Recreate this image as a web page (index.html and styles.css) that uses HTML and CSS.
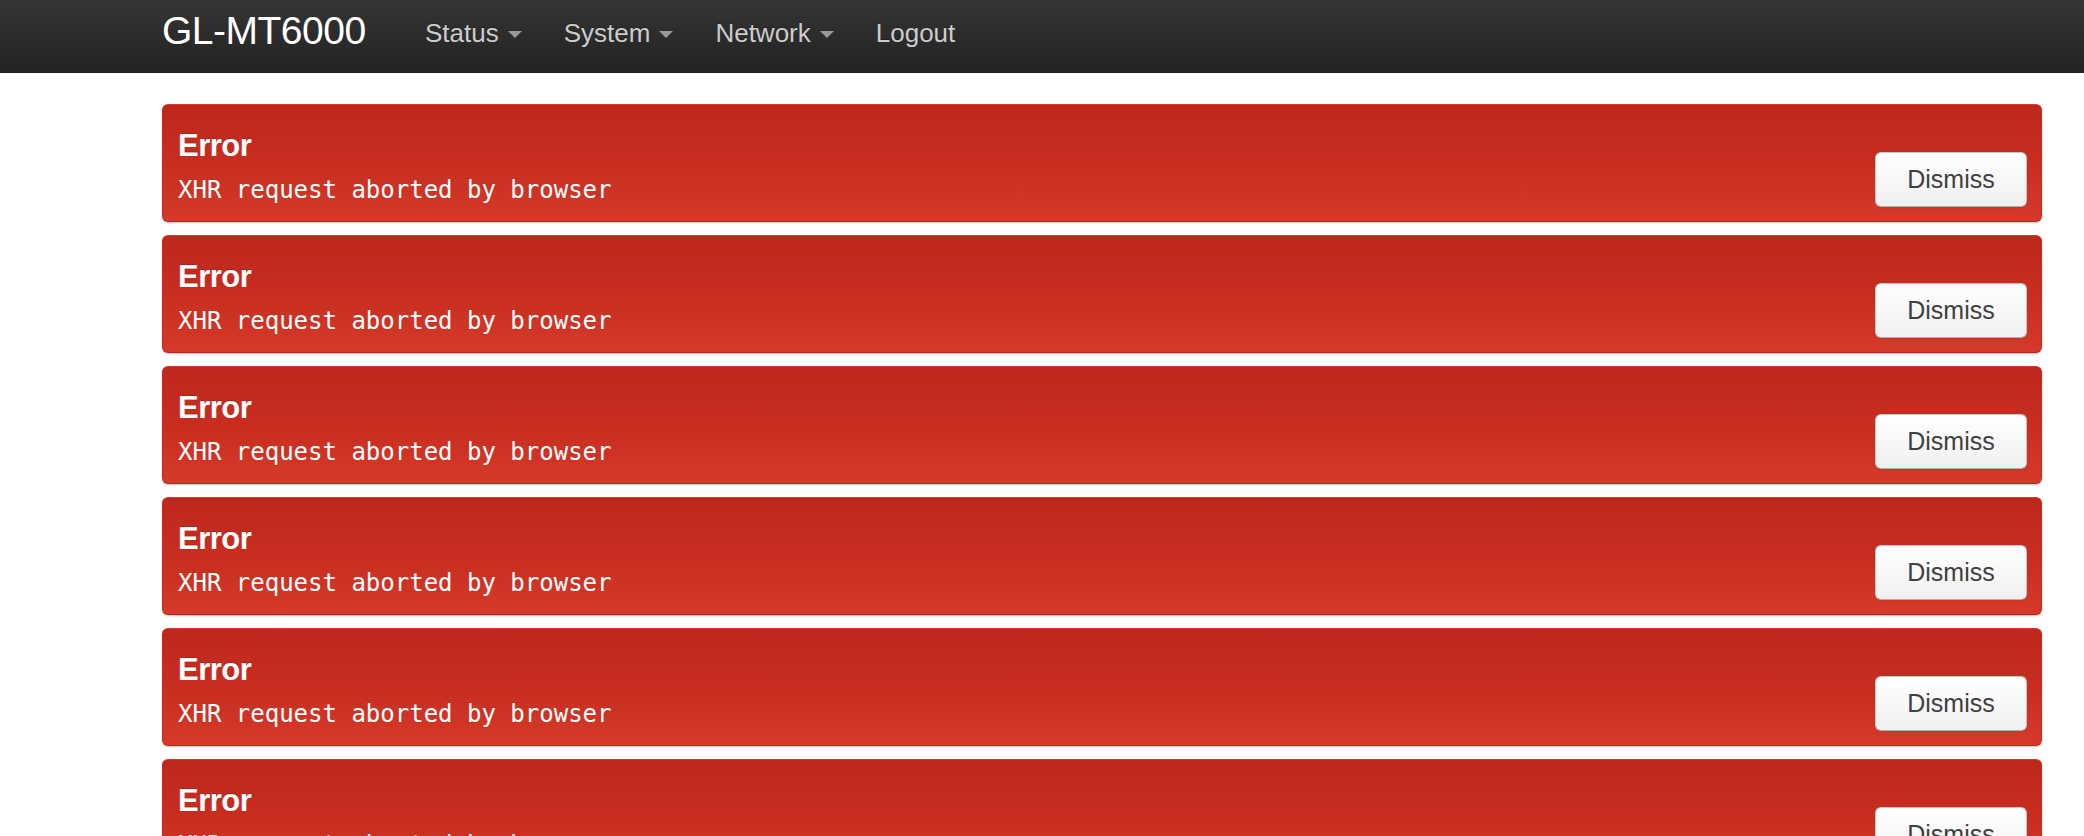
FILE: index.html
```html
<!DOCTYPE html>
<html lang="en">
<head>
    <meta charset="UTF-8">
    <meta name="viewport" content="width=device-width, initial-scale=1.0">
    <title>GL-MT6000 - LuCI</title>
    <link rel="stylesheet" href="styles.css">
</head>

<body>
    <header class="topbar">
        <div class="container flex">
            <a href="#" class="brand">GL-MT6000</a>
            <ul class="nav flex">
                <li><a href="#" class="menu">Status</a></li>
                <li><a href="#" class="menu">System</a></li>
                <li><a href="#" class="menu">Network</a></li>
                <li><a href="#">Logout</a></li>
            </ul>
        </div>
    </header>

    <main class="container" id="messages">
        <div class="alert-message error">
            <div class="alert-text">
                <h4>Error</h4>
                <pre>XHR request aborted by browser</pre>
            </div>
            <button class="btn">Dismiss</button>
        </div>
        <div class="alert-message error">
            <div class="alert-text">
                <h4>Error</h4>
                <pre>XHR request aborted by browser</pre>
            </div>
            <button class="btn">Dismiss</button>
        </div>
        <div class="alert-message error">
            <div class="alert-text">
                <h4>Error</h4>
                <pre>XHR request aborted by browser</pre>
            </div>
            <button class="btn">Dismiss</button>
        </div>
        <div class="alert-message error">
            <div class="alert-text">
                <h4>Error</h4>
                <pre>XHR request aborted by browser</pre>
            </div>
            <button class="btn">Dismiss</button>
        </div>
        <div class="alert-message error">
            <div class="alert-text">
                <h4>Error</h4>
                <pre>XHR request aborted by browser</pre>
            </div>
            <button class="btn">Dismiss</button>
        </div>
        <div class="alert-message error">
            <div class="alert-text">
                <h4>Error</h4>
                <pre>XHR request aborted by browser</pre>
            </div>
            <button class="btn">Dismiss</button>
        </div>
    </main>
</body>
</html>
```

FILE: styles.css
```css
*{
    margin:0;
    padding:0;
    box-sizing: border-box;
}
body{
    font-family: "Liberation Sans", Arial, sans-serif;
    background-color: #fff;
    color: #404040;
}
a{
    text-decoration: none;
}
ul{
    list-style: none;
}
.flex{
    display: flex;
    align-items: flex-start;
}
.container{
    width: 1880px;
    margin-left: 162px;
}
.topbar{
    height: 73px;
    background: linear-gradient(to bottom, #353535, #222);
}
.brand{
    width: 242px;
    padding-top: 9px;
    font-size: 39px;
    line-height: 1.15;
    letter-spacing: -0.5px;
    color: #fff;
}
.nav{
    padding-top: 17px;
}
.nav a{
    display: flex;
    align-items: center;
    padding: 0 21px;
    font-size: 26px;
    line-height: 32px;
    color: #ccc;
    text-shadow: 0 -1px 0 rgba(0,0,0,0.25);
}
.nav a.menu::after{
    content: "";
    margin-left: 9px;
    margin-top: 2px;
    border-top: 7px solid #999;
    border-left: 7px solid transparent;
    border-right: 7px solid transparent;
}
#messages{
    padding-top: 31px;
}
.alert-message{
    display: flex;
    justify-content: space-between;
    align-items: flex-end;
    height: 118px;
    margin-bottom: 13px;
    padding: 22px 14px 15px 15px;
    border: 1px solid #c52c20;
    border-top-color: #d43a28;
    border-bottom-color: #b8261b;
    border-radius: 6px;
    background: linear-gradient(to bottom, #be271d 0%, #c72e20 50%, #d5392a 100%);
    box-shadow: 0 1px 2px rgba(0,0,0,0.25);
    color: #fff;
}
.alert-text h4{
    font-size: 31px;
    line-height: 38px;
    font-weight: bold;
    letter-spacing: -0.5px;
    margin-bottom: 9px;
    text-shadow: 0 -1px 0 rgba(0,0,0,0.15);
}
.alert-text pre{
    font-family: "DejaVu Sans Mono", "Liberation Mono", monospace;
    font-size: 24px;
    line-height: 32px;
}
.btn{
    width: 152px;
    height: 55px;
    padding: 0;
    margin-bottom: -1px;
    border: 1px solid #c8c8c8;
    border-bottom-color: #b0b0b0;
    border-radius: 6px;
    background: linear-gradient(to bottom, #fff, #f0f0f0);
    box-shadow: inset 0 1px 0 rgba(255,255,255,0.2), 0 1px 2px rgba(0,0,0,0.05);
    font-family: "Liberation Sans", Arial, sans-serif;
    font-size: 25px;
    color: #404040;
    cursor: pointer;
}
```
